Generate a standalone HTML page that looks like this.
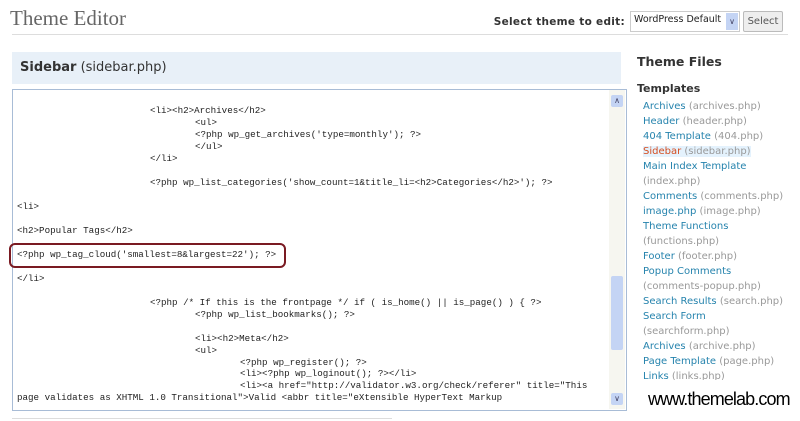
<!DOCTYPE html>
<html><head><style>
body{margin:0;width:800px;height:421px;background:#fff;position:relative;overflow:hidden;font-family:"DejaVu Sans",Verdana,sans-serif}
.a{position:absolute;white-space:pre}
.c{position:absolute;white-space:pre;font-family:"Liberation Mono",monospace;font-size:9.2px;color:#222;line-height:11px}
.r{position:absolute;left:643px;font-size:10px;white-space:pre;color:#2583ad}
.r span{color:#999}
</style></head><body>
<div class="a" style="left:10px;top:6px;font-family:'Liberation Serif',serif;font-size:21px;color:#666">Theme Editor</div>
<div class="a" style="left:12px;top:34px;width:776px;height:1px;background:#ddd"></div>
<div class="a" style="left:400px;width:225px;text-align:right;top:16px;font-size:10.5px;font-weight:bold;color:#333;letter-spacing:0.3px">Select theme to edit:</div>
<div class="a" style="left:630px;top:11px;width:108px;height:19px;border:1px solid #ccc;font-size:10px;color:#222"><span style="position:absolute;left:3px;top:2px;font-size:9.5px">WordPress Default</span><span style="position:absolute;right:1px;top:1px;width:12px;height:17px;background:#c4d4f4;font-size:8px;text-align:center;line-height:17px;color:#446">&#8744;</span></div>
<div class="a" style="left:743px;top:11px;width:38px;height:19px;border:1px solid #bbb;background:#eee;font-size:10px;color:#555;text-align:center;line-height:19px;border-radius:2px">Select</div>
<div class="a" style="left:12px;top:52px;width:609px;height:32px;background:#e8f0f8"></div>
<div class="a" style="left:20px;top:60px;font-size:13px;color:#333"><b>Sidebar</b> (sidebar.php)</div>
<div class="a" style="left:12px;top:89px;width:613px;height:320px;border:1px solid #a8bcd6;background:#fff"></div>
<div class="a" style="left:609px;top:90px;width:16px;height:319px;background:#f6f6f0"></div>
<div class="a" style="left:611px;top:95px;width:12px;height:12px;background:#c4d4f4;border-radius:2px;font-size:8px;text-align:center;color:#446;line-height:12px">&#8743;</div>
<div class="a" style="left:611px;top:276px;width:12px;height:74px;background:#c4d4f4;border-radius:2px"></div>
<div class="a" style="left:611px;top:393px;width:12px;height:12px;background:#c4d4f4;border-radius:2px;font-size:8px;text-align:center;color:#446;line-height:12px">&#8744;</div>
<div class="c" style="left:150px;top:105px">&lt;li&gt;&lt;h2&gt;Archives&lt;/h2&gt;</div>
<div class="c" style="left:195px;top:117px">&lt;ul&gt;</div>
<div class="c" style="left:195px;top:129px">&lt;?php wp_get_archives('type=monthly'); ?&gt;</div>
<div class="c" style="left:195px;top:141px">&lt;/ul&gt;</div>
<div class="c" style="left:150px;top:153px">&lt;/li&gt;</div>
<div class="c" style="left:150px;top:177px">&lt;?php wp_list_categories('show_count=1&amp;title_li=&lt;h2&gt;Categories&lt;/h2&gt;'); ?&gt;</div>
<div class="c" style="left:17px;top:201px">&lt;li&gt;</div>
<div class="c" style="left:17px;top:225px">&lt;h2&gt;Popular Tags&lt;/h2&gt;</div>
<div class="c" style="left:17px;top:249px">&lt;?php wp_tag_cloud('smallest=8&amp;largest=22'); ?&gt;</div>
<div class="a" style="left:9px;top:243px;width:273px;height:21px;border:2px solid #7a1a22;border-radius:6px"></div>
<div class="c" style="left:17px;top:273px">&lt;/li&gt;</div>
<div class="c" style="left:150px;top:297px">&lt;?php /* If this is the frontpage */ if ( is_home() || is_page() ) { ?&gt;</div>
<div class="c" style="left:195px;top:309px">&lt;?php wp_list_bookmarks(); ?&gt;</div>
<div class="c" style="left:195px;top:333px">&lt;li&gt;&lt;h2&gt;Meta&lt;/h2&gt;</div>
<div class="c" style="left:195px;top:345px">&lt;ul&gt;</div>
<div class="c" style="left:240px;top:357px">&lt;?php wp_register(); ?&gt;</div>
<div class="c" style="left:240px;top:368px">&lt;li&gt;&lt;?php wp_loginout(); ?&gt;&lt;/li&gt;</div>
<div class="c" style="left:240px;top:380px">&lt;li&gt;&lt;a href="http://validator.w3.org/check/referer" title="This</div>
<div class="c" style="left:17px;top:392px">page validates as XHTML 1.0 Transitional"&gt;Valid &lt;abbr title="eXtensible HyperText Markup</div>
<div class="a" style="left:12px;top:418px;width:380px;height:1px;background:#ddd"></div>
<div class="a" style="left:637px;top:54px;font-size:12.5px;font-weight:bold;color:#333">Theme Files</div>
<div class="a" style="left:637px;top:82px;font-size:11px;font-weight:bold;color:#333">Templates</div>
<div class="r" style="top:101px">Archives <span>(archives.php)</span></div>
<div class="r" style="top:116px">Header <span>(header.php)</span></div>
<div class="r" style="top:131px">404 Template <span>(404.php)</span></div>
<div class="r" style="top:146px;color:#d54e21;background:#e4f2fd">Sidebar <span>(sidebar.php)</span></div>
<div class="r" style="top:161px">Main Index Template</div>
<div class="r" style="top:176px"><span>(index.php)</span></div>
<div class="r" style="top:191px">Comments <span>(comments.php)</span></div>
<div class="r" style="top:206px">image.php <span>(image.php)</span></div>
<div class="r" style="top:221px">Theme Functions</div>
<div class="r" style="top:236px"><span>(functions.php)</span></div>
<div class="r" style="top:251px">Footer <span>(footer.php)</span></div>
<div class="r" style="top:266px">Popup Comments</div>
<div class="r" style="top:281px"><span>(comments-popup.php)</span></div>
<div class="r" style="top:296px">Search Results <span>(search.php)</span></div>
<div class="r" style="top:311px">Search Form</div>
<div class="r" style="top:326px"><span>(searchform.php)</span></div>
<div class="r" style="top:341px">Archives <span>(archive.php)</span></div>
<div class="r" style="top:356px">Page Template <span>(page.php)</span></div>
<div class="r" style="top:371px;height:9px;overflow:hidden">Links <span>(links.php)</span></div>
<div class="a" style="left:648px;top:389px;font-family:'Liberation Sans',sans-serif;font-size:18px;color:#000;letter-spacing:-0.9px">www.themelab.com</div>
</body></html>
